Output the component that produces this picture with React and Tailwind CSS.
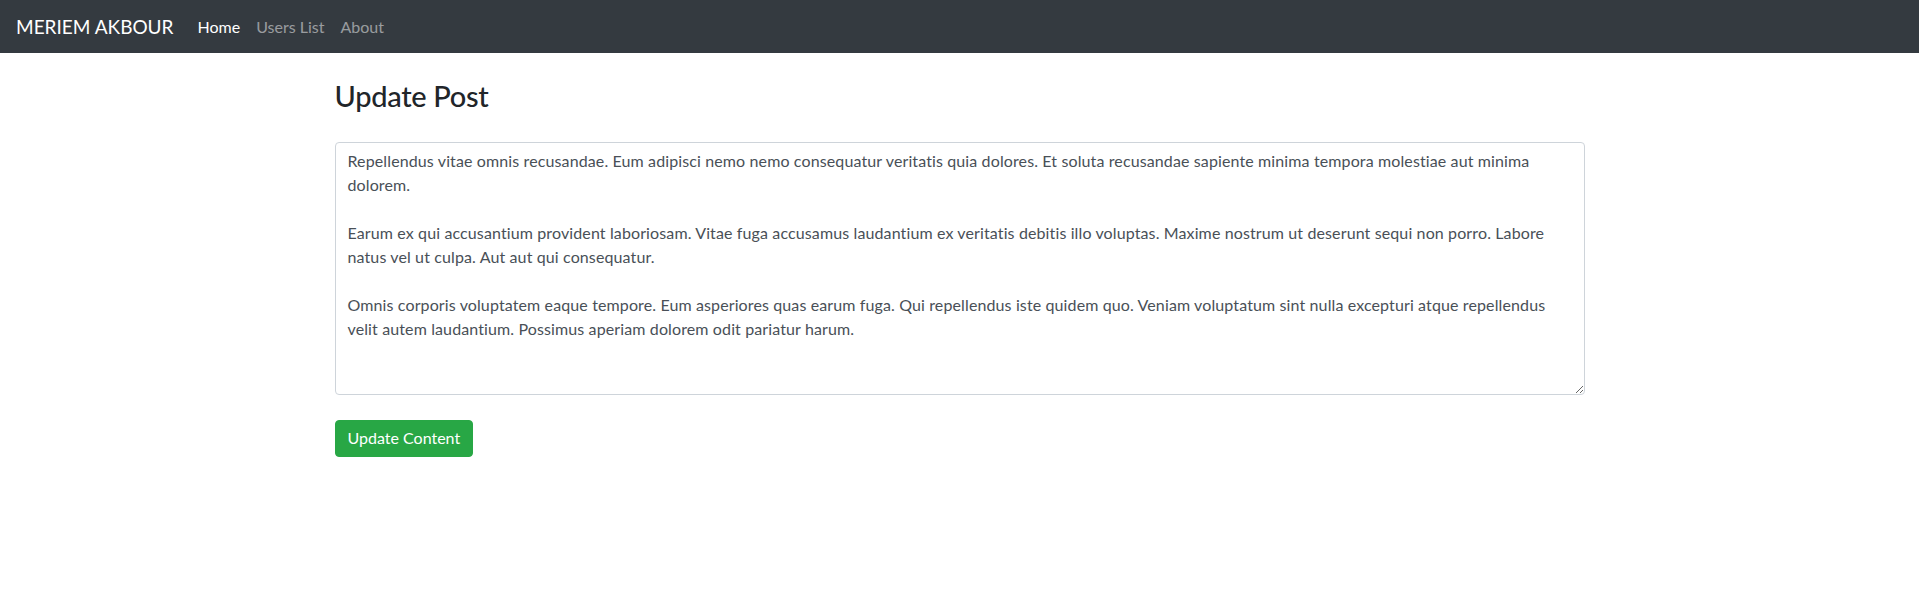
import React, { useState } from "react";

const initialContent = `Repellendus vitae omnis recusandae. Eum adipisci nemo nemo consequatur veritatis quia dolores. Et soluta recusandae sapiente minima tempora molestiae aut minima dolorem.

Earum ex qui accusantium provident laboriosam. Vitae fuga accusamus laudantium ex veritatis debitis illo voluptas. Maxime nostrum ut deserunt sequi non porro. Labore natus vel ut culpa. Aut aut qui consequatur.

Omnis corporis voluptatem eaque tempore. Eum asperiores quas earum fuga. Qui repellendus iste quidem quo. Veniam voluptatum sint nulla excepturi atque repellendus velit autem laudantium. Possimus aperiam dolorem odit pariatur harum.`;

const Navbar = () => (
  <nav className="flex items-center h-[53px] px-4 bg-[#343a40]">
    <a href="#" className="text-[19px] leading-[30px] text-white mr-4">
      MERIEM AKBOUR
    </a>
    <ul className="flex items-center">
      <li>
        <a href="#" className="block px-2 text-base text-white">
          Home
        </a>
      </li>
      <li>
        <a href="#" className="block px-2 text-base text-white/50">
          Users List
        </a>
      </li>
      <li>
        <a href="#" className="block px-2 text-base text-white/50">
          About
        </a>
      </li>
    </ul>
  </nav>
);

export default function App() {
  const [content, setContent] = useState(initialContent);

  return (
    <div className="min-h-[590px] bg-white font-['Lato','Segoe_UI',sans-serif]">
      <Navbar />
      <main className="w-[1250px] mx-auto pt-[26px]">
        <h2 className="text-[29px] leading-[1.2] font-medium tracking-[-0.3px] text-[#212529] mb-[28px]">
          Update Post
        </h2>
        <form onSubmit={(e) => e.preventDefault()}>
          <textarea
            value={content}
            onChange={(e) => setContent(e.target.value)}
            className="block w-full h-[253px] px-3 py-1.5 text-base leading-6 tracking-[0.12px] text-[#495057] border border-[#ced4da] rounded bg-white outline-none"
          />
          <button
            type="submit"
            className="mt-[25px] h-[37px] px-3 text-base text-white bg-[#28a745] border border-[#28a745] rounded"
          >
            Update Content
          </button>
        </form>
      </main>
    </div>
  );
}
